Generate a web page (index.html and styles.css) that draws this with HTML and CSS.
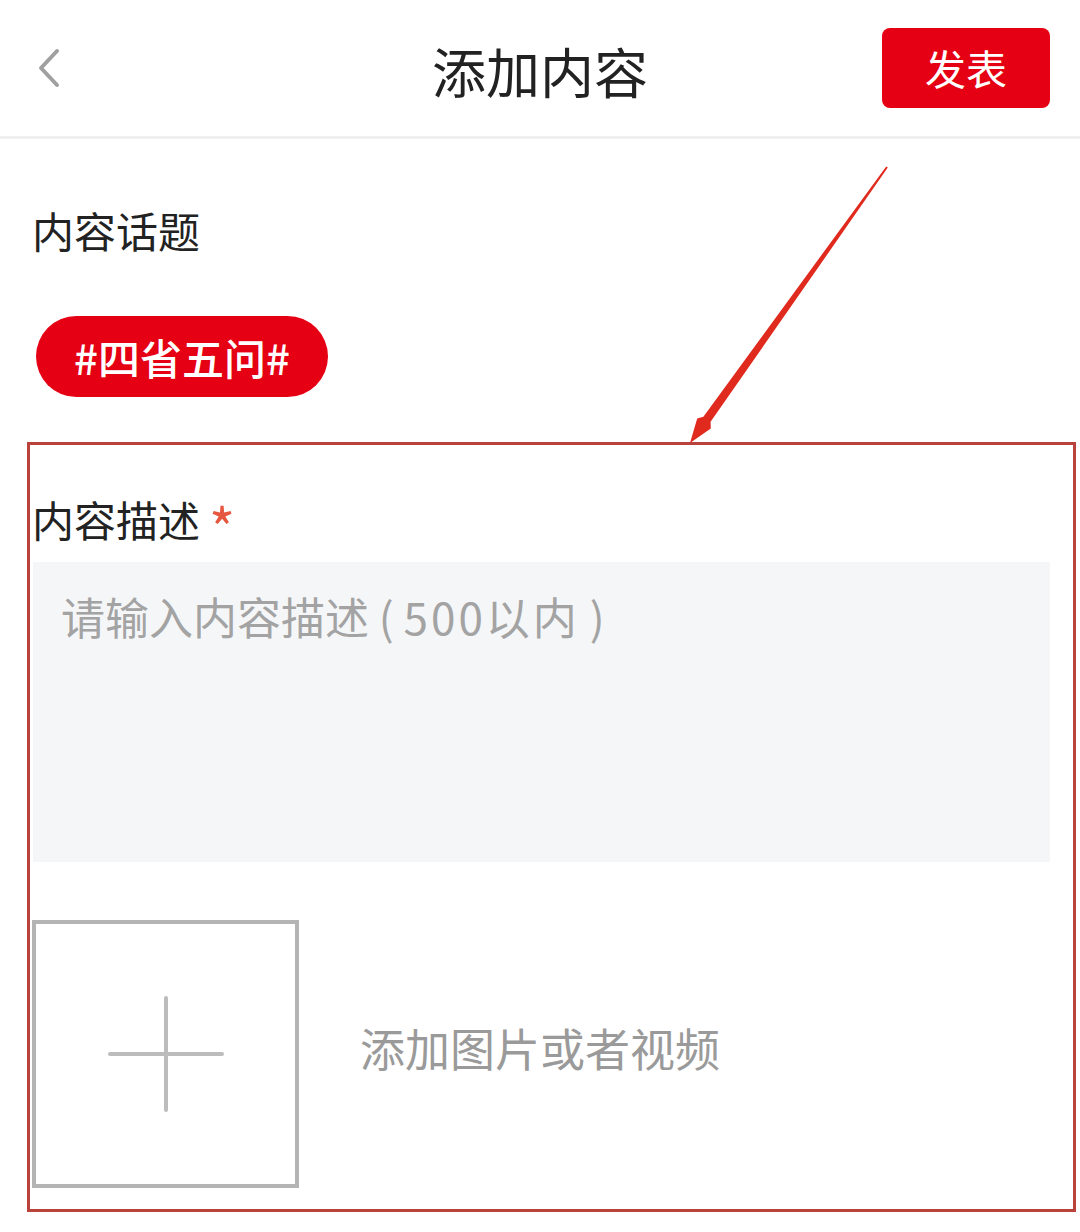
FILE: index.html
```html
<!DOCTYPE html>
<html lang="zh-CN">
<head>
<meta charset="utf-8">
<title>添加内容</title>
<link rel="stylesheet" href="styles.css">
</head>
<body>
<div class="page">
  <header class="topbar">
    <div class="back">
      <svg width="24" height="40" viewBox="0 0 24 40"><path d="M19 3 L3 20 L19 37" fill="none" stroke="#a0a0a0" stroke-width="4" stroke-linecap="round" stroke-linejoin="round"/></svg>
    </div>
    <h1 class="title">添加内容</h1>
    <div class="actions"><button class="publish">发表</button></div>
  </header>

  <main class="content">
    <div class="label topic-label">内容话题</div>
    <div class="tags"><span class="tag">#四省五问#</span></div>

    <section class="desc">
      <div class="label desc-label">内容描述<span class="req">*</span></div>
      <div class="textarea"><span class="placeholder">请输入内容描述 ( <span class="num">500以内</span> )</span></div>
      <div class="upload-row">
        <div class="upload-box">
          <svg width="116" height="116" viewBox="0 0 116 116"><path d="M58 2 V114 M2 58 H114" stroke="#bcbcbc" stroke-width="4" stroke-linecap="round"/></svg>
        </div>
        <div class="upload-text">添加图片或者视频</div>
      </div>
    </section>
  </main>

  <div class="annot-box"></div>
  <svg class="annot-arrow" width="1080" height="1232" viewBox="0 0 1080 1232">
    <polygon points="887.8,167.6 710.6,421.8 710.8,428.6 690,443 697.2,418.6 703.4,416.8 886.2,166.4" fill="#e02a1e"/>
  </svg>
</div>
</body>
</html>
```

FILE: styles.css
```css
* { box-sizing: border-box; }
html, body { margin: 0; padding: 0; background: #fff; }
body {
  font-family: "Noto Sans CJK SC", "Noto Sans", sans-serif;
  color: #222;
  width: 1080px;
  height: 1232px;
  overflow: hidden;
}
.page { position: relative; width: 1080px; height: 1232px; }

.topbar {
  height: 139px;
  border-bottom: 3px solid #f0f0f0;
  display: grid;
  grid-template-columns: 1fr auto 1fr;
  align-items: center;
  padding: 0 30px;
}
.back { display: flex; align-items: center; padding-left: 8px; }
.title {
  margin: 0;
  font-size: 54px;
  font-weight: 400;
  color: #222;
  line-height: 1;
  padding-top: 6px;
}
.actions { display: flex; justify-content: flex-end; }
.publish {
  width: 168px;
  height: 80px;
  margin-top: -1px;
  border: none;
  border-radius: 8px;
  background: #e50014;
  color: #fff;
  font-family: inherit;
  font-size: 41px;
  line-height: 1;
  padding: 0;
}

.content { padding: 0 30px 0 32px; }
.label {
  font-size: 42px;
  line-height: 50px;
  color: #222;
}
.topic-label { margin-top: 66px; }
.tags { margin-top: 61px; padding-left: 4px; }
.tag {
  display: inline-flex;
  align-items: center;
  justify-content: center;
  width: 292px;
  height: 81px;
  border-radius: 41px;
  background: #e50014;
  color: #fff;
  font-size: 42px;
  font-weight: 500;
}

.desc { margin-top: 97px; }
.req {
  color: #e5573f;
  font-size: 56px;
  line-height: 0;
  position: relative;
  top: 13px;
  margin-left: 9px;
}
.textarea {
  margin-top: 18px;
  margin-left: 1px;
  width: 1017px;
  height: 300px;
  background: #f5f6f8;
  padding: 28px 0 0 28px;
}
.placeholder {
  font-size: 44px;
  line-height: 52px;
  color: #a3a3a3;
}
.num { letter-spacing: 3px; }
.upload-row {
  margin-top: 58px;
  display: flex;
  align-items: center;
  gap: 61px;
}
.upload-box {
  width: 267px;
  height: 268px;
  border: 4px solid #b4b4b4;
  display: flex;
  align-items: center;
  justify-content: center;
}
.upload-text {
  font-size: 45px;
  color: #9a9a9a;
  margin-top: -14px;
}

.annot-box {
  position: absolute;
  left: 27px;
  top: 442px;
  width: 1049px;
  height: 770px;
  border: 3px solid #b9423c;
  pointer-events: none;
}
.annot-arrow { position: absolute; left: 0; top: 0; pointer-events: none; }
```
